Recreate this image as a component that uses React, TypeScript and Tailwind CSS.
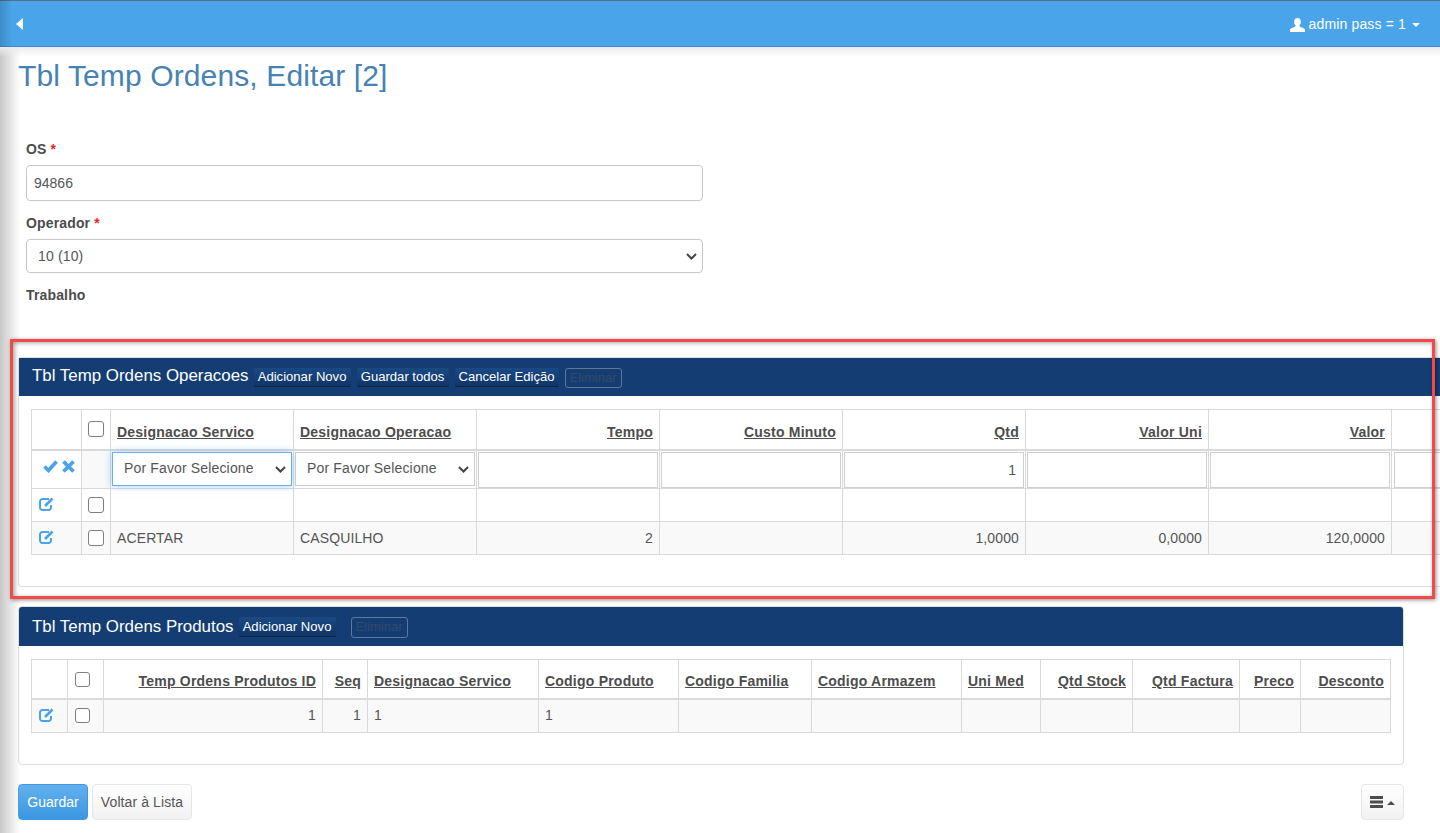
import React from "react";

const HeadBtn = ({ children, cls = "" }: { children: React.ReactNode; cls?: string }) => (
  <span className={"inline-flex items-center justify-center h-[19px] rounded-[2px] bg-gradient-to-b from-[#1a4a85] to-[#113567] border-b border-[#0b2547] text-white text-[13.1px] leading-none " + cls}>
    {children}
  </span>
);

const Disabled = ({ cls = "" }: { cls?: string }) => (
  <span className={"inline-flex items-center justify-center h-[20px] w-[57px] rounded-[3px] border border-[#5f7896] text-[#34496a] text-[13.1px] leading-none " + cls}>
    Eliminar
  </span>
);

const Check = ({ small = false }: { small?: boolean }) => (
  <input
    type="checkbox"
    readOnly
    className={
      small
        ? "block ml-[7px] h-[15px] w-[15px] appearance-none rounded-[3px] border-[1.5px] border-[#7f7f7f] bg-white"
        : "block mx-auto h-[16px] w-[16px] appearance-none rounded-[3px] border-[1.5px] border-[#7f7f7f] bg-white"
    }
  />
);

const Edit = () => (
  <svg width="15" height="14" viewBox="0 0 15 14" fill="none" stroke="#4aa3e8" aria-hidden="true" className="block">
    <path d="M10 2H3.500A2.500 2.500 0 0 0 1 4.500V10.500A2.500 2.500 0 0 0 3.500 13H9.500A2.500 2.500 0 0 0 12 10.500V8" strokeWidth="2" />
    <path d="M6 9L13.500 1.500" strokeWidth="2.600" />
  </svg>
);

const OkIcon = () => (
  <svg width="15" height="13" viewBox="0 0 15 13" fill="none" stroke="#4aa3e8" strokeWidth="3.600" aria-hidden="true">
    <path d="M1.500 6.500L5.500 10.500L13.500 1.500" />
  </svg>
);

const XIcon = () => (
  <svg width="13" height="13" viewBox="0 0 13 13" fill="none" stroke="#4aa3e8" strokeWidth="3.800" aria-hidden="true">
    <path d="M1.500 1.500L11.500 11.500M11.500 1.500L1.500 11.500" />
  </svg>
);

const Select = ({ label, cls }: { label: string; cls: string }) => (
  <div className="relative">
    <select className={"block w-full appearance-none bg-white px-[11px] text-[14px] tracking-[0.15px] text-[#555555] " + cls}>
      <option>{label}</option>
    </select>
    <svg width="11" height="7" viewBox="0 0 11 7" fill="none" stroke="#444444" strokeWidth="2" aria-hidden="true" className="pointer-events-none absolute right-[6px] top-1/2 -mt-[3px]">
      <path d="M1 1L5.500 5.500L10 1" />
    </svg>
  </div>
);

const th = "border border-[#d9d9d9] border-b-2 px-[6px] pt-[12px] pb-[7px] align-bottom font-bold text-[14px] tracking-[0.22px] leading-[19px] text-[#4d4d4d] underline";
const td = "border border-[#d9d9d9] px-[6px] text-[14px] tracking-[0.12px] text-[#555555] align-middle";
const tdField = "border border-[#d9d9d9] px-[1px] pt-[1px] align-top";
const label = "block h-[20px] text-[14px] tracking-[0.15px] font-bold leading-[18px] text-[#4d4d4d]";

const cols1: [string, string, boolean][] = [
  ["Designacao Servico", "w-[183px]", false],
  ["Designacao Operacao", "w-[183px]", false],
  ["Tempo", "w-[183px]", true],
  ["Custo Minuto", "w-[183px]", true],
  ["Qtd", "w-[183px]", true],
  ["Valor Uni", "w-[183px]", true],
  ["Valor", "w-[183px]", true],
  ["", "w-[183px]", true],
];

const cols2: [string, string, boolean][] = [
  ["Temp Ordens Produtos ID", "w-[219px]", true],
  ["Seq", "w-[45px]", true],
  ["Designacao Servico", "w-[171px]", false],
  ["Codigo Produto", "w-[140px]", false],
  ["Codigo Familia", "w-[133px]", false],
  ["Codigo Armazem", "w-[150px]", false],
  ["Uni Med", "w-[79px]", false],
  ["Qtd Stock", "w-[92px]", true],
  ["Qtd Factura", "w-[107px]", true],
  ["Preco", "w-[61px]", true],
  ["Desconto", "w-[90px]", true],
];

const fieldInput = "block w-full h-[36px] border-[1.5px] border-[#cfcfcf] bg-white pl-[6px] pr-[7px] text-right text-[14px] text-[#555555]";

export default function App() {
  return (
    <div className="relative h-[833px] w-[1440px] overflow-hidden bg-white font-['Liberation_Sans',Arial,sans-serif] text-[14px] text-[#555555]">
      <header className="flex h-[47px] items-center justify-between border-t border-t-[#5b6b7c] border-b border-b-[#3a8bd0] bg-[#49a4ea] pl-[16px] pr-[20px] text-white">
        <svg width="7" height="12" viewBox="0 0 7 12" aria-hidden="true">
          <path d="M7 0V12L0 6Z" fill="#fff" />
        </svg>
        <div className="flex items-center pt-[2px] text-[14px] tracking-[0.15px]">
          <svg width="15" height="14" viewBox="0 0 16 15" className="mr-[4px]" aria-hidden="true">
            <path d="M8 0c2.300 0 3.600 1.700 3.600 4 0 1.700-.7 3.100-1.600 4 0 1 .6 1.300 2 1.900 1.600.7 3.700 1.200 4 2.600V15H0v-2.500c.3-1.400 2.400-1.900 4-2.600C5.400 9.300 6 9 6 8c-.9-.9-1.600-2.300-1.600-4C4.400 1.700 5.700 0 8 0Z" fill="#fff" />
          </svg>
          <span>admin pass = 1</span>
          <span className="ml-[6px] h-0 w-0 border-x-[4px] border-t-[4px] border-x-transparent border-t-white" />
        </div>
      </header>

      <main className="px-[18px]">
        <h1 className="pt-[11px] text-[30px] font-normal leading-[36px] tracking-[0.12px] text-[#4682b4]">Tbl Temp Ordens, Editar [2]</h1>

        <form className="ml-[8px] mt-[46px] w-[677px]">
          <label className={label}>
            OS <span className="text-[#e8262a]">*</span>
          </label>
          <input readOnly value="94866" className="mt-[5px] block h-[36px] w-full rounded-[4px] border border-[#c8c8c8] bg-white px-[7px] text-[14px] text-[#555555]" />
          <label className={`mt-[13px] ${label}`}>
            Operador <span className="text-[#e8262a]">*</span>
          </label>
          <div className="mt-[5px]">
            <Select label="10 (10)" cls="h-[34px] rounded-[4px] border border-[#c8c8c8]" />
          </div>
          <label className={`mt-[13px] ${label}`}>Trabalho</label>
        </form>

        <section className="mt-[51px] h-[230px] w-[1440px] rounded-[4px] border border-r-0 border-[#dddddd]">
          <div className="flex h-[38px] items-center bg-[#143e73] pl-[13px] pt-[1px] text-white">
            <span className="mb-[2px] text-[16.9px] leading-none">Tbl Temp Ordens Operacoes</span>
            <HeadBtn cls="ml-[5px] w-[97px]">Adicionar Novo</HeadBtn>
            <HeadBtn cls="ml-[6px] w-[92px]">Guardar todos</HeadBtn>
            <HeadBtn cls="ml-[6px] w-[104px]">Cancelar Edição</HeadBtn>
            <Disabled cls="ml-[6px]" />
          </div>
          <div className="px-[12px] pt-[13px]">
            <table className="w-[1543px] table-fixed border-collapse">
              <thead>
                <tr className="h-[40px]">
                  <th className="w-[50px] border border-b-2 border-[#d9d9d9]" />
                  <th className="w-[29px] border border-b-2 border-[#d9d9d9] align-middle"><Check /></th>
                  {cols1.map(([t, w, r]) => (
                    <th key={t || "x"} className={`${th} ${w} ${r ? "text-right" : "text-left"}`}>{t}</th>
                  ))}
                </tr>
              </thead>
              <tbody>
                <tr className="h-[39px]">
                  <td className={`${td} !px-0`}>
                    <div className="flex justify-center gap-[4px] pb-[6px] pl-[5px]">
                      <OkIcon />
                      <XIcon />
                    </div>
                  </td>
                  <td className={`${td} bg-[#f9f9f9]`} />
                  <td className={tdField}>
                    <Select label="Por Favor Selecione" cls="h-[34px] border border-[#66afe9] shadow-[0_0_8px_rgba(102,175,233,0.6)]" />
                  </td>
                  <td className={tdField}>
                    <Select label="Por Favor Selecione" cls="h-[34px] border border-[#cccccc]" />
                  </td>
                  <td className={tdField}><input readOnly className={fieldInput} /></td>
                  <td className={tdField}><input readOnly className={fieldInput} /></td>
                  <td className={tdField}><input readOnly value="1" className={fieldInput} /></td>
                  <td className={tdField}><input readOnly className={fieldInput} /></td>
                  <td className={tdField}><input readOnly className={fieldInput} /></td>
                  <td className={`${tdField} !px-[2px]`}><input readOnly className={fieldInput} /></td>
                </tr>
                <tr className="h-[33px]">
                  <td className={td}><div className="pb-[2px] pl-[1px]"><Edit /></div></td>
                  <td className={td}><Check /></td>
                  <td className={td} /><td className={td} /><td className={td} /><td className={td} />
                  <td className={td} /><td className={td} /><td className={td} /><td className={td} />
                </tr>
                <tr className="h-[33px] bg-[#f9f9f9]">
                  <td className={td}><div className="pb-[2px] pl-[1px]"><Edit /></div></td>
                  <td className={td}><Check /></td>
                  <td className={td}>ACERTAR</td>
                  <td className={td}>CASQUILHO</td>
                  <td className={`${td} text-right`}>2</td>
                  <td className={td} />
                  <td className={`${td} text-right`}>1,0000</td>
                  <td className={`${td} text-right`}>0,0000</td>
                  <td className={`${td} text-right`}>120,0000</td>
                  <td className={td} />
                </tr>
              </tbody>
            </table>
          </div>
        </section>

        <section className="mt-[19px] h-[159px] w-[1386px] overflow-hidden rounded-[4px] border border-[#dddddd]">
          <div className="flex h-[39px] items-center bg-[#143e73] pl-[13px] pt-[1px] text-white">
            <span className="text-[16.9px] leading-none">Tbl Temp Ordens Produtos</span>
            <HeadBtn cls="ml-[5px] w-[97px] !h-[20px]">Adicionar Novo</HeadBtn>
            <Disabled cls="ml-[15px] !h-[21px]" />
          </div>
          <div className="px-[12px] pt-[13px]">
            <table className="w-[1360px] table-fixed border-collapse">
              <thead>
                <tr className="h-[39px]">
                  <th className="w-[36px] border border-b-2 border-[#d9d9d9]" />
                  <th className="w-[36px] border border-b-2 border-[#d9d9d9] align-middle"><Check small /></th>
                  {cols2.map(([t, w, r]) => (
                    <th key={t} className={`${th} ${w} ${r ? "text-right" : "text-left"}`}>{t}</th>
                  ))}
                </tr>
              </thead>
              <tbody>
                <tr className="h-[33px] bg-[#f9f9f9]">
                  <td className={td}><div className="pb-[2px] pl-[1px]"><Edit /></div></td>
                  <td className={`${td} !px-0`}><Check small /></td>
                  <td className={`${td} text-right`}>1</td>
                  <td className={`${td} text-right`}>1</td>
                  <td className={td}>1</td>
                  <td className={td}>1</td>
                  <td className={td} /><td className={td} /><td className={td} /><td className={td} />
                  <td className={td} /><td className={td} /><td className={td} />
                </tr>
              </tbody>
            </table>
          </div>
        </section>

        <div className="mt-[19px] flex w-[1386px] items-center">
          <button className="h-[36px] w-[70px] rounded-[4px] border border-[#3f97e0] bg-gradient-to-b from-[#62b1ee] to-[#3a97e0] text-[14px] text-white">Guardar</button>
          <button className="ml-[4px] h-[36px] w-[100px] rounded-[4px] border border-[#e6e6e6] bg-gradient-to-b from-white to-[#f2f2f2] text-[14px] tracking-[0.1px] text-[#555555]">Voltar à Lista</button>
          <button className="ml-auto flex h-[36px] w-[43px] items-center justify-center rounded-[4px] border border-[#e6e6e6] bg-gradient-to-b from-white to-[#f2f2f2]" aria-label="Menu">
            <svg width="13" height="12" viewBox="0 0 13 12" aria-hidden="true">
              <rect y="0" width="13" height="3" fill="#4d4d4d" />
              <rect y="4.500" width="13" height="3" fill="#4d4d4d" />
              <rect y="9" width="13" height="3" fill="#4d4d4d" />
            </svg>
            <span className="ml-[4px] mt-[2px] h-0 w-0 border-x-[4px] border-b-[4px] border-x-transparent border-b-[#4d4d4d]" />
          </button>
        </div>
      </main>

      {/* Shadow thrown by the collapsed sidebar and the top bar */}
      <div className="pointer-events-none absolute bottom-0 left-0 top-[47px] w-[20px] bg-gradient-to-r from-[#c8c8c8] to-transparent" />
      <div className="pointer-events-none absolute left-0 top-0 h-[47px] w-[12px] bg-gradient-to-r from-black/15 to-transparent" />
      <div className="pointer-events-none absolute left-0 right-0 top-[47px] h-[10px] bg-gradient-to-b from-[#ececec] to-transparent" />

      {/* Annotation frame drawn over the screenshot */}
      <div className="pointer-events-none absolute left-[10px] top-[339px] h-[260px] w-[1425px] border-[3px] border-[#f24a4a] shadow-[1px_1px_4px_rgba(0,0,0,0.45),inset_1px_1px_4px_rgba(0,0,0,0.35)]" />
    </div>
  );
}
